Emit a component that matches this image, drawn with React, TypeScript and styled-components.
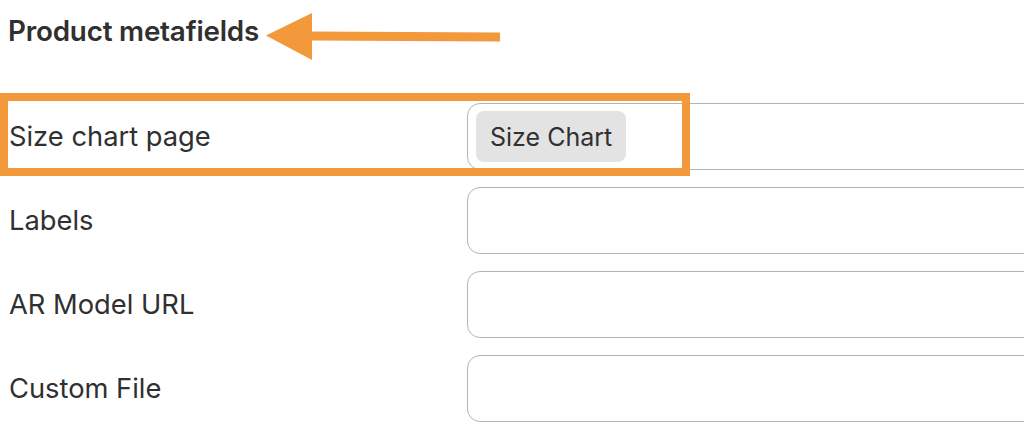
import styled, { createGlobalStyle } from 'styled-components';

const GlobalStyle = createGlobalStyle`
  html, body {
    margin: 0;
    padding: 0;
    background: #ffffff;
    overflow: hidden;
  }
  body {
    font-family: Inter, "Noto Sans", "Liberation Sans", sans-serif;
    color: #303030;
  }
`;

const ACCENT = '#f1993b';

const Page = styled.div`
  width: 1024px;
  height: 444px;
  padding: 15px 0 0 8px;
  box-sizing: border-box;
  overflow: hidden;
`;

const Header = styled.div`
  display: flex;
  align-items: flex-start;
  gap: 6px;
`;

const Title = styled.h2`
  margin: 0;
  font-size: 27.8px;
  font-weight: 600;
  letter-spacing: -0.2px;
  color: #303030;
  line-height: 33px;
`;

const Arrow = styled.svg`
  flex: none;
  margin-top: -2px;
`;

const Fields = styled.div`
  margin-top: 38px;
  display: flex;
  flex-direction: column;
  gap: 17px;
`;

const Row = styled.div`
  position: relative;
  display: grid;
  grid-template-columns: 459px 700px;
  align-items: center;
  height: 67px;
`;

const Label = styled.label`
  font-size: 27.3px;
  font-weight: 400;
  color: #303030;
  padding-left: 1px;
`;

const Field = styled.div`
  height: 67px;
  box-sizing: border-box;
  border: 1.5px solid #b4b4b4;
  border-radius: 13px;
  background: #fff;
  display: flex;
  align-items: center;
  padding: 0 8px;
`;

const Chip = styled.span`
  display: inline-flex;
  align-items: center;
  height: 51px;
  padding: 0 14px;
  border-radius: 8px;
  background: #e3e3e3;
  font-size: 25px;
  color: #303030;
`;

const Highlight = styled.div`
  position: absolute;
  top: -10px;
  left: -8px;
  width: 690px;
  height: 83px;
  box-sizing: border-box;
  border: 8px solid ${ACCENT};
  pointer-events: none;
`;

type FieldDef = {
  label: string
  chip?: string
  highlighted?: boolean
};

const fields: FieldDef[] = [
  { label: 'Size chart page', chip: 'Size Chart', highlighted: true },
  { label: 'Labels' },
  { label: 'AR Model URL' },
  { label: 'Custom File' },
];

const App = () => (
  <Page>
    <GlobalStyle />
    <Header>
      <Title>Product metafields</Title>
      <Arrow width="240" height="52" viewBox="0 0 240 52">
        {/* arrow pointing back at the title */}
        <path d="M46 18.5 L235 19.5 L235 28.5 L46 27.5 Z" fill={ACCENT} />
        <path d="M1 22.5 L47 0 L47 47 Z" fill={ACCENT} />
      </Arrow>
    </Header>
    <Fields>
      {fields.map((f) => (
        <Row key={f.label}>
          <Label>{f.label}</Label>
          <Field>
            {f.chip && <Chip>{f.chip}</Chip>}
          </Field>
          {f.highlighted && <Highlight />}
        </Row>
      ))}
    </Fields>
  </Page>
);

export default App;
